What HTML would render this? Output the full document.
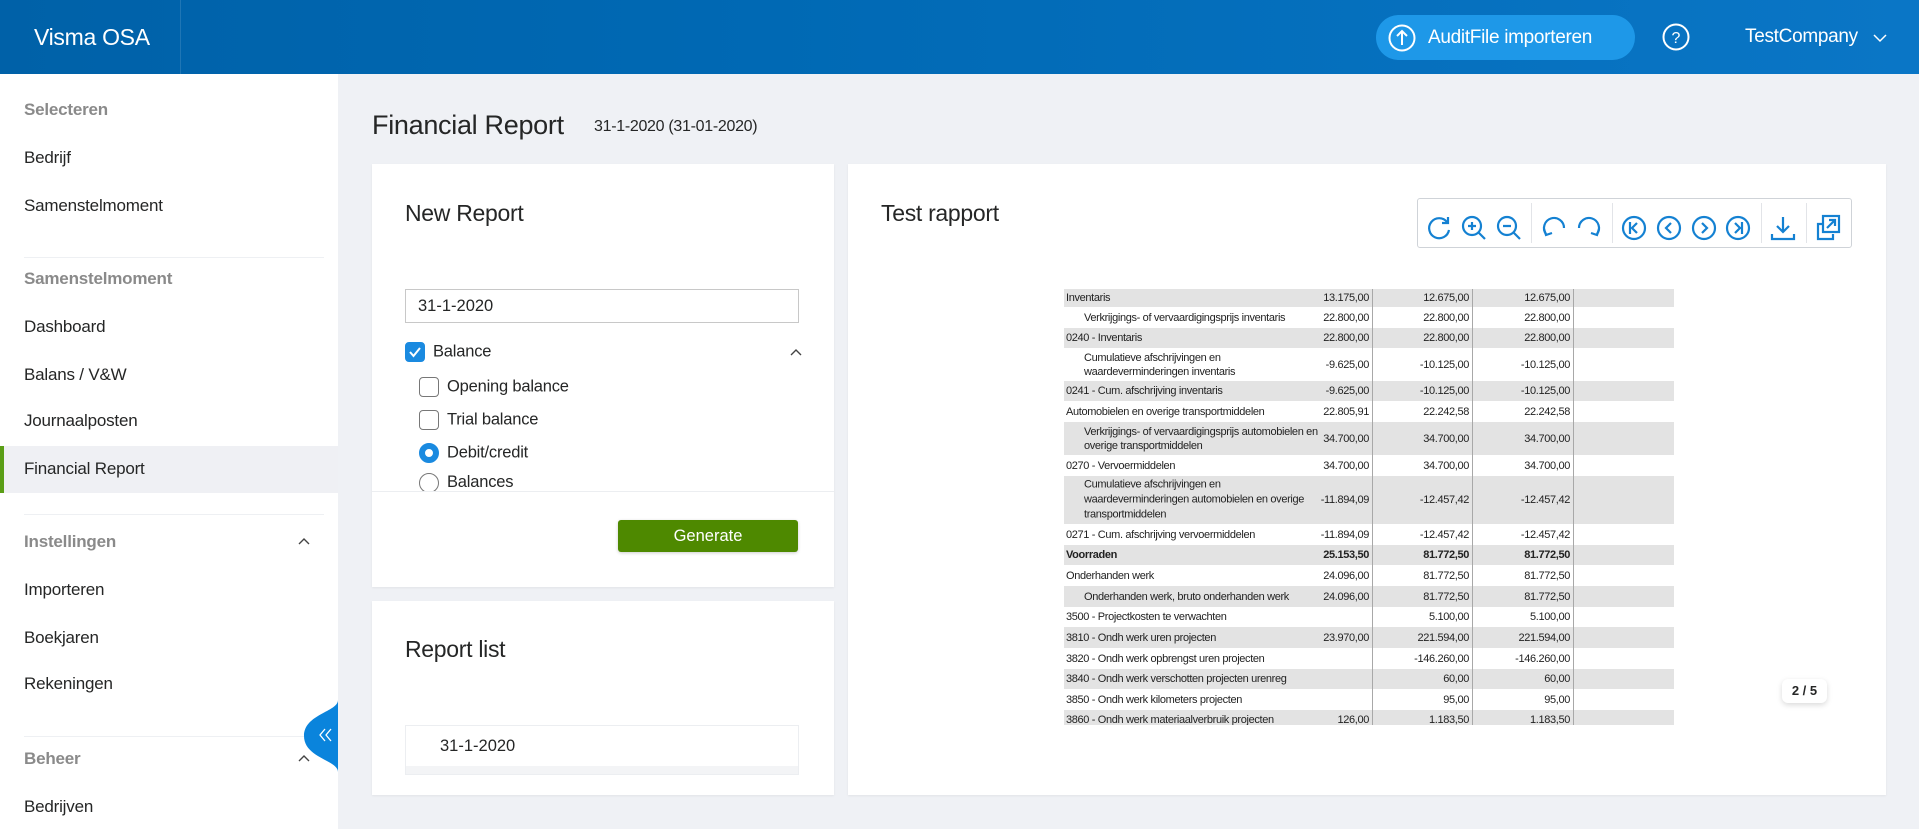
<!DOCTYPE html>
<html><head><meta charset="utf-8"><style>
*{box-sizing:border-box;margin:0;padding:0}
body{width:1919px;height:829px;overflow:hidden;background:#eff1f5;font-family:"Liberation Sans",sans-serif;color:#252626;position:relative}
.abs{position:absolute}
#hdr{left:0;top:0;width:1919px;height:74px;background:linear-gradient(90deg,#0061a8 0%,#0069b4 40%,#0a76c6 100%)}
#logo{left:0;top:0;width:181px;height:74px;border-right:1px solid rgba(255,255,255,.12);color:#fff;font-size:23px;line-height:74px;padding-left:34px;letter-spacing:-.3px}
#btn{left:1376px;top:15px;width:259px;height:45px;border-radius:23px;background:#1e98e8;color:#fff;font-size:19px;line-height:45px;padding-left:52px;letter-spacing:-.3px}
#side{left:0;top:74px;width:338px;height:755px;background:#fff}
.si{position:absolute;left:24px;font-size:17px;color:#252626;transform:translateY(-50%);letter-spacing:-.2px}
.sh{color:#8a8a8a;font-weight:bold}
.dv{position:absolute;left:24px;width:300px;height:1px;background:#eef0f3}
.card{position:absolute;background:#fff;box-shadow:0 1px 2px rgba(0,0,0,.06)}
.row{position:absolute;left:1064px;width:610px;font-size:11px;letter-spacing:-.35px;color:#222;white-space:nowrap}
.row.g{background:#e3e3e3}
.row .l{position:absolute;left:2px;top:50%;transform:translateY(-50%);line-height:14px}
.row .l.i{left:20px}
.row .n{position:absolute;top:50%;transform:translateY(-50%);text-align:right;width:95px}
.row .c1{left:210px}.row .c2{left:310px}.row .c3{left:411px}
.vl{position:absolute;top:289px;height:436px;width:1px;background:#a8a8a8}
.tb svg{position:absolute;top:214px}
.sep{position:absolute;top:203px;width:1px;height:40px;background:#e2e4e8}
.chk{position:absolute;width:20px;height:20px;border:1.5px solid #777;border-radius:4px;background:#fff}
.rad{position:absolute;width:20px;height:20px;border:1.5px solid #777;border-radius:50%;background:#fff}
.lbl{position:absolute;font-size:16.5px;color:#252626;transform:translateY(-50%);letter-spacing:-.2px}
</style></head><body>
<div id="hdr" class="abs"></div>
<div id="logo" class="abs">Visma OSA</div>
<div id="btn" class="abs">AuditFile importeren</div>
<svg class="abs" style="left:1388px;top:24px" width="28" height="28" viewBox="0 0 28 28"><circle cx="14" cy="14" r="12.5" fill="none" stroke="#fff" stroke-width="2"/><path d="M14 21V7M9 12l5-5 5 5" fill="none" stroke="#fff" stroke-width="2"/></svg>
<svg class="abs" style="left:1662px;top:23px" width="28" height="28" viewBox="0 0 28 28"><circle cx="14" cy="14" r="12.5" fill="none" stroke="#fff" stroke-width="2"/><text x="14" y="20" text-anchor="middle" font-size="16" fill="#fff" font-family="Liberation Sans">?</text></svg>
<div class="abs" style="left:1745px;top:26px;color:#fff;font-size:19px;letter-spacing:-.3px">TestCompany</div>
<svg class="abs" style="left:1873px;top:33px" width="14" height="10" viewBox="0 0 14 10"><path d="M1 2l6 6 6-6" fill="none" stroke="#fff" stroke-width="1.5"/></svg>

<div id="side" class="abs"></div>
<div class="si sh" style="top:110px">Selecteren</div>
<div class="si" style="top:158px">Bedrijf</div>
<div class="si" style="top:206px">Samenstelmoment</div>
<div class="dv" style="top:257px"></div>
<div class="si sh" style="top:279px">Samenstelmoment</div>
<div class="si" style="top:327px">Dashboard</div>
<div class="si" style="top:375px">Balans / V&amp;W</div>
<div class="si" style="top:421px">Journaalposten</div>
<div class="abs" style="left:0;top:446px;width:338px;height:47px;background:#eff0f4;border-left:4px solid #5a9e16"></div>
<div class="si" style="top:469px">Financial Report</div>
<div class="dv" style="top:514px"></div>
<div class="si sh" style="top:542px">Instellingen</div>
<svg class="abs" style="left:298px;top:537px" width="12" height="8" viewBox="0 0 12 8"><path d="M1 7l5-5 5 5" fill="none" stroke="#444" stroke-width="1.4"/></svg>
<div class="si" style="top:590px">Importeren</div>
<div class="si" style="top:638px">Boekjaren</div>
<div class="si" style="top:684px">Rekeningen</div>
<div class="dv" style="top:736px"></div>
<div class="si sh" style="top:759px">Beheer</div>
<svg class="abs" style="left:298px;top:754px" width="12" height="8" viewBox="0 0 12 8"><path d="M1 7l5-5 5 5" fill="none" stroke="#444" stroke-width="1.4"/></svg>
<div class="si" style="top:807px">Bedrijven</div>
<svg class="abs" style="left:300px;top:700px" width="38" height="72" viewBox="0 0 38 72"><path d="M38 0 C38 12 4 14 4 36 C4 58 38 60 38 72Z" fill="#0a84dc"/><path d="M25 29l-5 6 5 6M31 29l-5 6 5 6" fill="none" stroke="#fff" stroke-width="1.3"/></svg>

<div class="abs" style="left:372px;top:110px;font-size:27px;letter-spacing:-.3px">Financial Report</div>
<div class="abs" style="left:594px;top:118px;font-size:16px;letter-spacing:-.3px">31-1-2020 (31-01-2020)</div>

<div class="card" style="left:372px;top:164px;width:462px;height:423px"></div>
<div class="abs" style="left:405px;top:200px;font-size:23px;letter-spacing:-.3px">New Report</div>
<div class="abs" style="left:405px;top:289px;width:394px;height:34px;border:1px solid #c8c8c8;font-size:16.5px;line-height:32px;padding-left:12px">31-1-2020</div>
<div class="chk" style="left:405px;top:342px;background:#1a8ae0;border-color:#1a8ae0"></div>
<svg class="abs" style="left:408px;top:345px" width="14" height="14" viewBox="0 0 14 14"><path d="M2 7l3.5 4L12 3" fill="none" stroke="#fff" stroke-width="2"/></svg>
<div class="lbl" style="left:433px;top:352px">Balance</div>
<svg class="abs" style="left:790px;top:348px" width="12" height="8" viewBox="0 0 12 8"><path d="M1 7l5-5 5 5" fill="none" stroke="#444" stroke-width="1.4"/></svg>
<div class="chk" style="left:419px;top:377px"></div>
<div class="lbl" style="left:447px;top:387px">Opening balance</div>
<div class="chk" style="left:419px;top:410px"></div>
<div class="lbl" style="left:447px;top:420px">Trial balance</div>
<div class="rad" style="left:419px;top:443px;border:6px solid #1a8ae0"></div>
<div class="lbl" style="left:447px;top:453px">Debit/credit</div>
<div class="abs" style="left:372px;top:468px;width:462px;height:23px;overflow:hidden"><div class="rad" style="left:47px;top:5px"></div><div class="lbl" style="left:75px;transform:none;top:5px">Balances</div></div>
<div class="abs" style="left:372px;top:491px;width:462px;height:1px;background:#eceef1"></div>
<div class="abs" style="left:618px;top:520px;width:180px;height:32px;background:#4e8900;border-radius:3px;color:#fff;font-size:16.5px;text-align:center;line-height:32px;box-shadow:0 1px 3px rgba(0,0,0,.2)">Generate</div>

<div class="card" style="left:372px;top:601px;width:462px;height:194px"></div>
<div class="abs" style="left:405px;top:636px;font-size:23px;letter-spacing:-.3px">Report list</div>
<div class="abs" style="left:405px;top:725px;width:394px;height:50px;border:1px solid #eceef1;background:linear-gradient(#fff 0,#fff 40px,#f3f4f6 40px)"></div>
<div class="abs" style="left:440px;top:737px;font-size:16.5px">31-1-2020</div>

<div class="card" style="left:848px;top:164px;width:1038px;height:631px"></div>
<div class="abs" style="left:881px;top:200px;font-size:23px;letter-spacing:-.3px">Test rapport</div>
<div class="abs" style="left:1417px;top:198px;width:435px;height:50px;border:1px solid #cfd3d8;border-radius:3px;background:#fff"></div>
<div class="sep" style="left:1531px"></div><div class="sep" style="left:1612px"></div><div class="sep" style="left:1761px"></div><div class="sep" style="left:1806px"></div>
<div class="tb" style="position:absolute;left:0;top:0">
<svg style="left:1426px" width="26" height="28" viewBox="0 0 26 28" fill="none" stroke="#1481d2" stroke-width="2.2"><path d="M21 8A10 10 0 1 0 23 16"/><path d="M22 3v6h-6"/></svg>
<svg style="left:1461px" width="26" height="28" viewBox="0 0 26 28" fill="none" stroke="#1481d2" stroke-width="2.2"><circle cx="11" cy="12" r="9"/><path d="M17.5 18.5L24 25M11 8v8M7 12h8"/></svg>
<svg style="left:1496px" width="26" height="28" viewBox="0 0 26 28" fill="none" stroke="#1481d2" stroke-width="2.2"><circle cx="11" cy="12" r="9"/><path d="M17.5 18.5L24 25M7 12h8"/></svg>
<svg style="left:1541px" width="26" height="28" viewBox="0 0 26 28" fill="none" stroke="#1481d2" stroke-width="2.2"><path d="M5 20A10 10 0 1 1 23 14"/><path d="M3 15l2 6 6-2"/></svg>
<svg style="left:1576px" width="26" height="28" viewBox="0 0 26 28" fill="none" stroke="#1481d2" stroke-width="2.2"><path d="M21 20A10 10 0 1 0 3 14"/><path d="M23 15l-2 6-6-2"/></svg>
<svg style="left:1621px" width="26" height="28" viewBox="0 0 26 28" fill="none" stroke="#1481d2" stroke-width="2.2"><circle cx="13" cy="14" r="11"/><path d="M9 8v12M16 9l-5 5 5 5"/></svg>
<svg style="left:1656px" width="26" height="28" viewBox="0 0 26 28" fill="none" stroke="#1481d2" stroke-width="2.2"><circle cx="13" cy="14" r="11"/><path d="M15 9l-5 5 5 5"/></svg>
<svg style="left:1691px" width="26" height="28" viewBox="0 0 26 28" fill="none" stroke="#1481d2" stroke-width="2.2"><circle cx="13" cy="14" r="11"/><path d="M11 9l5 5-5 5"/></svg>
<svg style="left:1725px" width="26" height="28" viewBox="0 0 26 28" fill="none" stroke="#1481d2" stroke-width="2.2"><circle cx="13" cy="14" r="11"/><path d="M10 9l5 5-5 5M17 8v12"/></svg>
<svg style="left:1770px" width="26" height="28" viewBox="0 0 26 28" fill="none" stroke="#1481d2" stroke-width="2.2"><path d="M13 3v15M7 12l6 6 6-6M2 20v5h22v-5"/></svg>
<svg style="left:1815px" width="26" height="28" viewBox="0 0 26 28" fill="none" stroke="#1481d2" stroke-width="2.2"><rect x="8" y="2" width="16" height="16"/><path d="M8 10H3v15h15v-5M12 14l8-8M14 6h6v6"/></svg>
</div>

<div class="row g" style="top:289px;height:18px"><span class="l">Inventaris</span><span class="n c1">13.175,00</span><span class="n c2">12.675,00</span><span class="n c3">12.675,00</span></div>
<div class="row" style="top:307px;height:21px"><span class="l i">Verkrijgings- of vervaardigingsprijs inventaris</span><span class="n c1">22.800,00</span><span class="n c2">22.800,00</span><span class="n c3">22.800,00</span></div>
<div class="row g" style="top:328px;height:20px"><span class="l">0240 - Inventaris</span><span class="n c1">22.800,00</span><span class="n c2">22.800,00</span><span class="n c3">22.800,00</span></div>
<div class="row" style="top:348px;height:33px"><span class="l i">Cumulatieve afschrijvingen en<br>waardeverminderingen inventaris</span><span class="n c1">-9.625,00</span><span class="n c2">-10.125,00</span><span class="n c3">-10.125,00</span></div>
<div class="row g" style="top:381px;height:20px"><span class="l">0241 - Cum. afschrijving inventaris</span><span class="n c1">-9.625,00</span><span class="n c2">-10.125,00</span><span class="n c3">-10.125,00</span></div>
<div class="row" style="top:401px;height:21px"><span class="l">Automobielen en overige transportmiddelen</span><span class="n c1">22.805,91</span><span class="n c2">22.242,58</span><span class="n c3">22.242,58</span></div>
<div class="row g" style="top:422px;height:33px"><span class="l i">Verkrijgings- of vervaardigingsprijs automobielen en<br>overige transportmiddelen</span><span class="n c1">34.700,00</span><span class="n c2">34.700,00</span><span class="n c3">34.700,00</span></div>
<div class="row" style="top:455px;height:21px"><span class="l">0270 - Vervoermiddelen</span><span class="n c1">34.700,00</span><span class="n c2">34.700,00</span><span class="n c3">34.700,00</span></div>
<div class="row g" style="top:476px;height:48px"><span class="l i" style="line-height:15px">Cumulatieve afschrijvingen en<br>waardeverminderingen automobielen en overige<br>transportmiddelen</span><span class="n c1">-11.894,09</span><span class="n c2">-12.457,42</span><span class="n c3">-12.457,42</span></div>
<div class="row" style="top:524px;height:21px"><span class="l">0271 - Cum. afschrijving vervoermiddelen</span><span class="n c1">-11.894,09</span><span class="n c2">-12.457,42</span><span class="n c3">-12.457,42</span></div>
<div class="row g" style="top:545px;height:20px;font-weight:bold"><span class="l">Voorraden</span><span class="n c1">25.153,50</span><span class="n c2">81.772,50</span><span class="n c3">81.772,50</span></div>
<div class="row" style="top:565px;height:21px"><span class="l">Onderhanden werk</span><span class="n c1">24.096,00</span><span class="n c2">81.772,50</span><span class="n c3">81.772,50</span></div>
<div class="row g" style="top:586px;height:21px"><span class="l i">Onderhanden werk, bruto onderhanden werk</span><span class="n c1">24.096,00</span><span class="n c2">81.772,50</span><span class="n c3">81.772,50</span></div>
<div class="row" style="top:607px;height:20px"><span class="l">3500 - Projectkosten te verwachten</span><span class="n c2">5.100,00</span><span class="n c3">5.100,00</span></div>
<div class="row g" style="top:627px;height:21px"><span class="l">3810 - Ondh werk uren projecten</span><span class="n c1">23.970,00</span><span class="n c2">221.594,00</span><span class="n c3">221.594,00</span></div>
<div class="row" style="top:648px;height:21px"><span class="l">3820 - Ondh werk opbrengst uren projecten</span><span class="n c2">-146.260,00</span><span class="n c3">-146.260,00</span></div>
<div class="row g" style="top:669px;height:20px"><span class="l">3840 - Ondh werk verschotten projecten urenreg</span><span class="n c2">60,00</span><span class="n c3">60,00</span></div>
<div class="row" style="top:689px;height:21px"><span class="l">3850 - Ondh werk kilometers projecten</span><span class="n c2">95,00</span><span class="n c3">95,00</span></div>
<div class="row g" style="top:710px;height:15px;overflow:hidden"><span class="l" style="top:10px">3860 - Ondh werk materiaalverbruik projecten</span><span class="n c1" style="top:10px">126,00</span><span class="n c2" style="top:10px">1.183,50</span><span class="n c3" style="top:10px">1.183,50</span></div>
<div class="vl" style="left:1372px"></div><div class="vl" style="left:1472px"></div><div class="vl" style="left:1573px"></div>

<div class="abs" style="left:1782px;top:679px;width:45px;height:24px;background:#fff;border-radius:6px;box-shadow:0 2px 6px rgba(0,0,0,.15);font-size:13px;font-weight:bold;text-align:center;line-height:24px">2 / 5</div>
</body></html>
